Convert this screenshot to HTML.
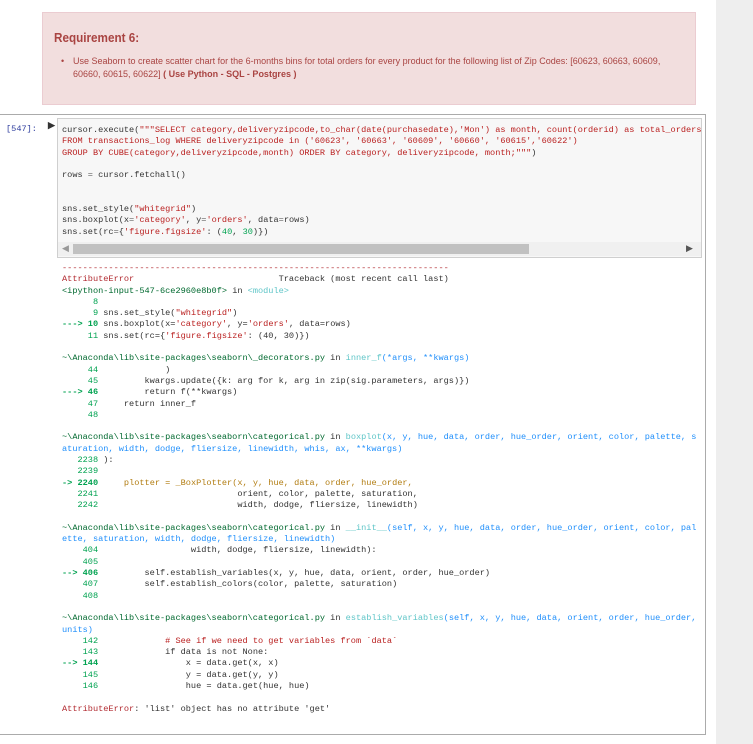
<!DOCTYPE html>
<html><head><meta charset="utf-8"><style>
body{margin:0;width:753px;height:744px;background:#fff;position:relative;overflow:hidden;font-family:"Liberation Sans",sans-serif}
.strip{position:absolute;left:716px;top:0;width:37px;height:744px;background:#eee}
.req{position:absolute;left:42px;top:12px;width:652px;height:91px;background:#f2dede;border:1px solid #ebccd1}
.req h3{position:absolute;left:11px;top:17px;margin:0;font-size:13px;font-weight:bold;color:#a94442;transform:scaleX(.9);transform-origin:left}
.req .li{position:absolute;left:30px;top:42px;width:612px;font-size:9px;line-height:12.5px;color:#a94442}
.req .dot{position:absolute;left:-12px;top:0}
.cell{position:absolute;left:-1px;top:114px;width:705px;height:619px;border:1px solid #ababab}
.prompt{position:absolute;left:6px;top:124px;font:8.6px "Liberation Mono",monospace;color:#303f9f}
.run{position:absolute;left:48px;top:120px;font-size:9px;font-weight:bold;color:#333}
.inp{position:absolute;left:57px;top:118px;width:643px;height:138px;background:#f7f7f7;border:1px solid #cfcfcf;overflow:hidden}
pre{margin:0;font:8.6px/11.3px "Liberation Mono",monospace;color:#333;white-space:pre}
.inp pre{position:absolute;left:4px;top:6px}
.sb{position:absolute;left:0;bottom:1px;width:643px;height:14px;background:#f0f0f0}
.sb .th{position:absolute;left:15px;top:2px;width:456px;height:10px;background:#c1c1c1}
.out{position:absolute;left:62px;top:263px}
.s{color:#ba2121}.k{color:#008000;font-weight:bold}.n{color:#666}.r{color:#b22b31}.g{color:#00a250}.gb{color:#00a250;font-weight:bold}.b{color:#208ffb}.c{color:#60c6c8}.y{color:#b27d12}.p{color:#00692f}
</style></head><body>
<div class="strip"></div>
<div class="req"><h3>Requirement 6:</h3>
<div class="li"><span class="dot">•</span>Use Seaborn to create scatter chart for the 6-months bins for total orders for every product for the following list of Zip Codes: [60623, 60663, 60609, 60660, 60615, 60622] <b>( Use Python - SQL - Postgres )</b></div></div>
<div class="cell"></div>
<div class="prompt">[547]:</div>
<div class="run">▶</div>
<div class="inp"><pre>cursor.execute(<span class="s">"""SELECT category,deliveryzipcode,to_char(date(purchasedate),'Mon') as month, count(orderid) as total_orders
FROM transactions_log WHERE deliveryzipcode in ('60623', '60663', '60609', '60660', '60615','60622')
GROUP BY CUBE(category,deliveryzipcode,month) ORDER BY category, deliveryzipcode, month;"""</span>)

rows <span class="n">=</span> cursor.fetchall()


sns.set_style(<span class="s">"whitegrid"</span>)
sns.boxplot(x<span class="n">=</span><span class="s">'category'</span>, y<span class="n">=</span><span class="s">'orders'</span>, data<span class="n">=</span>rows)
sns.set(rc<span class="n">=</span>{<span class="s">'figure.figsize'</span>: (<span class="g">40</span>, <span class="g">30</span>)})</pre>
<div class="sb"><span style="position:absolute;left:4px;top:1px;font-size:9px;color:#999">◀</span><div class="th"></div><span style="position:absolute;left:628px;top:1px;font-size:9px;color:#555">▶</span></div></div>
<div class="out"><pre><span class="r">---------------------------------------------------------------------------</span>
<span class="r">AttributeError</span>                            Traceback (most recent call last)
<span class="p">&lt;ipython-input-547-6ce2960e8b0f&gt;</span> in <span class="c">&lt;module&gt;</span>
<span class="g">      8</span>
<span class="g">      9</span> sns.set_style(<span class="s">"whitegrid"</span>)
<span class="gb">---&gt; 10</span> sns.boxplot(x=<span class="s">'category'</span>, y=<span class="s">'orders'</span>, data=rows)
<span class="g">     11</span> sns.set(rc={<span class="s">'figure.figsize'</span>: (40, 30)})

<span class="p">~\Anaconda\lib\site-packages\seaborn\_decorators.py</span> in <span class="c">inner_f</span><span class="b">(*args, **kwargs)</span>
<span class="g">     44</span>             )
<span class="g">     45</span>         kwargs.update({k: arg for k, arg in zip(sig.parameters, args)})
<span class="gb">---&gt; 46</span>         return f(**kwargs)
<span class="g">     47</span>     return inner_f
<span class="g">     48</span>

<span class="p">~\Anaconda\lib\site-packages\seaborn\categorical.py</span> in <span class="c">boxplot</span><span class="b">(x, y, hue, data, order, hue_order, orient, color, palette, s
aturation, width, dodge, fliersize, linewidth, whis, ax, **kwargs)</span>
<span class="g">   2238</span> ):
<span class="g">   2239</span>
<span class="gb">-&gt; 2240</span>     <span class="y">plotter = _BoxPlotter(x, y, hue, data, order, hue_order,</span>
<span class="g">   2241</span>                           orient, color, palette, saturation,
<span class="g">   2242</span>                           width, dodge, fliersize, linewidth)

<span class="p">~\Anaconda\lib\site-packages\seaborn\categorical.py</span> in <span class="c">__init__</span><span class="b">(self, x, y, hue, data, order, hue_order, orient, color, pal
ette, saturation, width, dodge, fliersize, linewidth)</span>
<span class="g">    404</span>                  width, dodge, fliersize, linewidth):
<span class="g">    405</span>
<span class="gb">--&gt; 406</span>         self.establish_variables(x, y, hue, data, orient, order, hue_order)
<span class="g">    407</span>         self.establish_colors(color, palette, saturation)
<span class="g">    408</span>

<span class="p">~\Anaconda\lib\site-packages\seaborn\categorical.py</span> in <span class="c">establish_variables</span><span class="b">(self, x, y, hue, data, orient, order, hue_order,
units)</span>
<span class="g">    142</span>             <span class="s"># See if we need to get variables from `data`</span>
<span class="g">    143</span>             if data is not None:
<span class="gb">--&gt; 144</span>                 x = data.get(x, x)
<span class="g">    145</span>                 y = data.get(y, y)
<span class="g">    146</span>                 hue = data.get(hue, hue)

<span class="r">AttributeError</span>: 'list' object has no attribute 'get'</pre></div>
</body></html>
